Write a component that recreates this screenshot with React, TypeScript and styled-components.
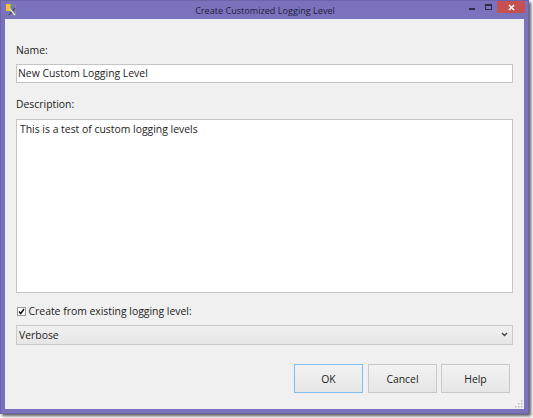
import React from 'react'
import styled, { createGlobalStyle } from 'styled-components'

const Global = createGlobalStyle`
  html, body { margin: 0; padding: 0; background: #ffffff; }
  body { width: 533px; height: 418px; overflow: hidden; }
`

const Shadow = styled.div`
  width: 533px;
  height: 418px;
  font-family: "Open Sans", Lato, sans-serif;
  font-size: 10.4px;
  color: #222;
`

const Window = styled.div`
  width: 529px;
  height: 414px;
  box-sizing: border-box;
  background: #7b72bd;
  border: 1px solid #6c64ab;
  box-shadow: 2px 2px 3px #555;
  display: flex;
  flex-direction: column;
  padding: 0 4px 4px;
`

const TitleBar = styled.div`
  height: 18px;
  flex: none;
  display: flex;
  align-items: flex-start;
`

const AppIcon = styled.svg`
  width: 12px;
  height: 12px;
  margin: 3px 0 0 0;
  flex: none;
`

const Title = styled.div`
  flex: 1;
  text-align: center;
  line-height: 19px;
  font-size: 9.1px;
  color: #22203a;
  padding-left: 50px;
`

const Controls = styled.div`
  display: flex;
  align-items: flex-start;
  flex: none;
  margin-right: -1px;
`

const ControlButton = styled.div`
  width: 17px;
  height: 12px;
  display: flex;
  align-items: center;
  justify-content: center;
`

const CloseButton = styled.div`
  width: 28px;
  height: 12px;
  background: #c75050;
  display: flex;
  align-items: center;
  justify-content: center;
`

const Body = styled.div`
  flex: 1;
  background: #f0f0f0;
  display: flex;
  flex-direction: column;
  padding: 0 11px 0 11px;
  position: relative;
  min-height: 0;
`

const Label = styled.div<{ $top: number }>`
  margin-top: ${p => p.$top}px;
  line-height: 16px;
  height: 16px;
`

const NameInput = styled.div`
  margin-top: 6px;
  height: 19px;
  box-sizing: border-box;
  background: #fff;
  border: 1px solid #c4c4c4;
  line-height: 16px;
  padding-left: 1px;
  width: 497px;
`

const DescriptionBox = styled.div`
  margin-top: 7px;
  height: 174px;
  box-sizing: border-box;
  background: #fff;
  border: 1px solid #c4c4c4;
  padding: 1px 3px;
  line-height: 16px;
  width: 497px;
`

const CheckRow = styled.div`
  margin-top: 10px;
  height: 16px;
  display: flex;
  align-items: center;
  gap: 3px;
  line-height: 16px;
`

const CheckBox = styled.div`
  width: 7px;
  height: 7px;
  margin-left: 1px;
  border: 1px solid #9a9a9a;
  background: #fff;
  display: flex;
  align-items: center;
  justify-content: center;
  flex: none;
`

const CheckText = styled.span`
  margin-left: -0.5px;
`

const Select = styled.div`
  margin-top: 6px;
  width: 497px;
  height: 20px;
  box-sizing: border-box;
  border: 1px solid #c8c8c8;
  background: linear-gradient(#f0f0f0, #e6e6e6);
  display: flex;
  align-items: center;
  justify-content: space-between;
  padding: 0 4px 1px 2px;
`

const ButtonRow = styled.div`
  margin-top: 19px;
  display: flex;
  justify-content: flex-end;
  gap: 4px;
  padding-right: 3px;
`

const Button = styled.div<{ $primary?: boolean }>`
  width: 69px;
  height: 29px;
  box-sizing: border-box;
  margin-right: ${p => (p.$primary ? '1px' : '0')};
  border: 1px solid ${p => (p.$primary ? '#7fbdf0' : '#c8c8c8')};
  background: linear-gradient(#f2f2f2, #e6e6e6);
  display: flex;
  align-items: center;
  justify-content: center;
`

const Grip = styled.svg`
  position: absolute;
  right: 1px;
  bottom: 1px;
  width: 8px;
  height: 8px;
`

export default function App() {
  return (
    <Shadow>
      <Global />
      <Window>
        <TitleBar>
          <AppIcon viewBox="0 0 12 12">
            <rect x="1" y="0" width="5" height="7" fill="#f2c230" />
            <rect x="5.5" y="1" width="5" height="10" fill="none" stroke="#7f9a86" strokeWidth="0.8" />
            <path d="M4 11 L10 4" stroke="#4d4a60" strokeWidth="1.3" />
            <path d="M5 5 L10 11" stroke="#e9e4d4" strokeWidth="1.3" />
          </AppIcon>
          <Title>Create Customized Logging Level</Title>
          <Controls>
            <ControlButton>
              <svg width="6" height="6" viewBox="0 0 6 6"><rect y="4" width="6" height="2" fill="#2d2b45" /></svg>
            </ControlButton>
            <ControlButton>
              <svg width="7" height="6" viewBox="0 0 7 6"><rect x="0.5" y="0.5" width="6" height="5" fill="none" stroke="#2d2b45" /><rect x="0" y="0" width="7" height="2" fill="#2d2b45" /></svg>
            </ControlButton>
            <CloseButton>
              <svg width="7" height="7" viewBox="0 0 7 7"><path d="M1 1 L6 6 M6 1 L1 6" stroke="#fff" strokeWidth="1.6" /></svg>
            </CloseButton>
          </Controls>
        </TitleBar>
        <Body>
          <Label $top={23}>Name:</Label>
          <NameInput>New Custom Logging Level</NameInput>
          <Label $top={13}>Description:</Label>
          <DescriptionBox>This is a test of custom logging levels</DescriptionBox>
          <CheckRow>
            <CheckBox>
              <svg width="7" height="7" viewBox="0 0 7 7"><path d="M1 3.5 L2.8 5.5 L6 1" fill="none" stroke="#111" strokeWidth="1.5" /></svg>
            </CheckBox>
            <CheckText>Create from existing logging level:</CheckText>
          </CheckRow>
          <Select>
            Verbose
            <svg width="7" height="5" viewBox="0 0 7 5"><path d="M1 1 L3.5 3.5 L6 1" fill="none" stroke="#444" strokeWidth="1.4" /></svg>
          </Select>
          <ButtonRow>
            <Button $primary>OK</Button>
            <Button>Cancel</Button>
            <Button>Help</Button>
          </ButtonRow>
          <Grip viewBox="0 0 8 8">
            <g fill="#bdbdbd">
              <rect x="6" y="0" width="1.5" height="1.5" />
              <rect x="3" y="3" width="1.5" height="1.5" />
              <rect x="6" y="3" width="1.5" height="1.5" />
              <rect x="0" y="6" width="1.5" height="1.5" />
              <rect x="3" y="6" width="1.5" height="1.5" />
              <rect x="6" y="6" width="1.5" height="1.5" />
            </g>
          </Grip>
        </Body>
      </Window>
    </Shadow>
  )
}
